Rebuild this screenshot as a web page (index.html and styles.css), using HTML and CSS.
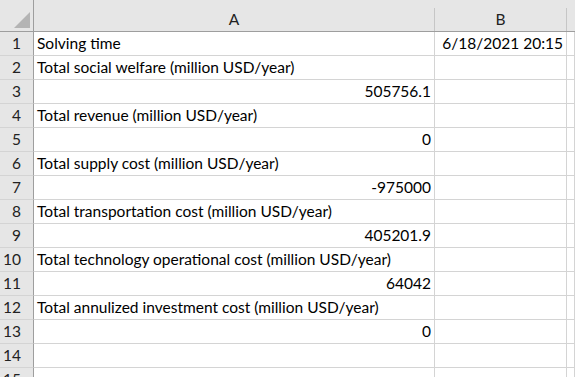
FILE: index.html
```html
<!DOCTYPE html>
<html lang="en">
<head>
  <meta charset="UTF-8">
  <title>Results</title>
  <link rel="stylesheet" href="styles.css">
</head>
<body>
  <div class="sheet">
    <div class="corner"><span class="corner-tri"></span></div>
    <div class="col-head"><span>A</span></div>
    <div class="col-head"><span>B</span></div>
    <div class="col-head last"><span></span></div>

    <div class="row-head">1</div><div class="cell">Solving time</div><div class="cell num">6/18/2021 20:15</div><div class="cell"></div>
    <div class="row-head">2</div><div class="cell">Total social welfare (million USD/year)</div><div class="cell"></div><div class="cell"></div>
    <div class="row-head">3</div><div class="cell num">505756.1</div><div class="cell"></div><div class="cell"></div>
    <div class="row-head">4</div><div class="cell">Total revenue (million USD/year)</div><div class="cell"></div><div class="cell"></div>
    <div class="row-head">5</div><div class="cell num">0</div><div class="cell"></div><div class="cell"></div>
    <div class="row-head">6</div><div class="cell">Total supply cost (million USD/year)</div><div class="cell"></div><div class="cell"></div>
    <div class="row-head">7</div><div class="cell num">-975000</div><div class="cell"></div><div class="cell"></div>
    <div class="row-head">8</div><div class="cell">Total transportation cost (million USD/year)</div><div class="cell"></div><div class="cell"></div>
    <div class="row-head">9</div><div class="cell num">405201.9</div><div class="cell"></div><div class="cell"></div>
    <div class="row-head">10</div><div class="cell">Total technology operational cost (million USD/year)</div><div class="cell"></div><div class="cell"></div>
    <div class="row-head">11</div><div class="cell num">64042</div><div class="cell"></div><div class="cell"></div>
    <div class="row-head">12</div><div class="cell">Total annulized investment cost (million USD/year)</div><div class="cell"></div><div class="cell"></div>
    <div class="row-head">13</div><div class="cell num">0</div><div class="cell"></div><div class="cell"></div>
    <div class="row-head">14</div><div class="cell"></div><div class="cell"></div><div class="cell"></div>
    <div class="row-head">15</div><div class="cell"></div><div class="cell"></div><div class="cell"></div>
  </div>
</body>
</html>
```

FILE: styles.css
```css
body {
  margin: 0;
  background: #fff;
  font-family: Lato, "Liberation Sans", sans-serif;
  font-size: 15.5px;
  color: #000;
  overflow: hidden;
}
.sheet {
  display: grid;
  grid-template-columns: 34px 401px 132px 1fr;
  grid-template-rows: 32px;
  grid-auto-rows: 24px;
}
.sheet > div {
  box-sizing: border-box;
  white-space: nowrap;
  overflow: hidden;
}
.corner {
  background: #e6e6e6;
  border-right: 1px solid #9e9e9e;
  border-bottom: 1px solid #9e9e9e;
  position: relative;
}
.corner-tri {
  position: absolute;
  right: 3px;
  bottom: 3px;
  width: 0;
  height: 0;
  border-left: 16px solid transparent;
  border-bottom: 16px solid #b4b4b4;
}
.col-head {
  background: #e6e6e6;
  border-bottom: 1px solid #9e9e9e;
  padding-top: 8px;
  display: flex;
}
.col-head span {
  flex: 1;
  border-right: 1px solid #c6c6c6;
  text-align: center;
  color: #222;
  line-height: 22px;
}
.col-head.last span {
  border-right: none;
}
.row-head {
  background: #e6e6e6;
  border-right: 1px solid #9e9e9e;
  border-bottom: 1px solid #d4d4d4;
  text-align: right;
  padding-right: 12px;
  line-height: 23px;
  color: #222;
}
.cell {
  border-right: 1px solid #d4d4d4;
  border-bottom: 1px solid #d4d4d4;
  padding: 0 3px;
  line-height: 23px;
}
.cell.num {
  text-align: right;
}
```
